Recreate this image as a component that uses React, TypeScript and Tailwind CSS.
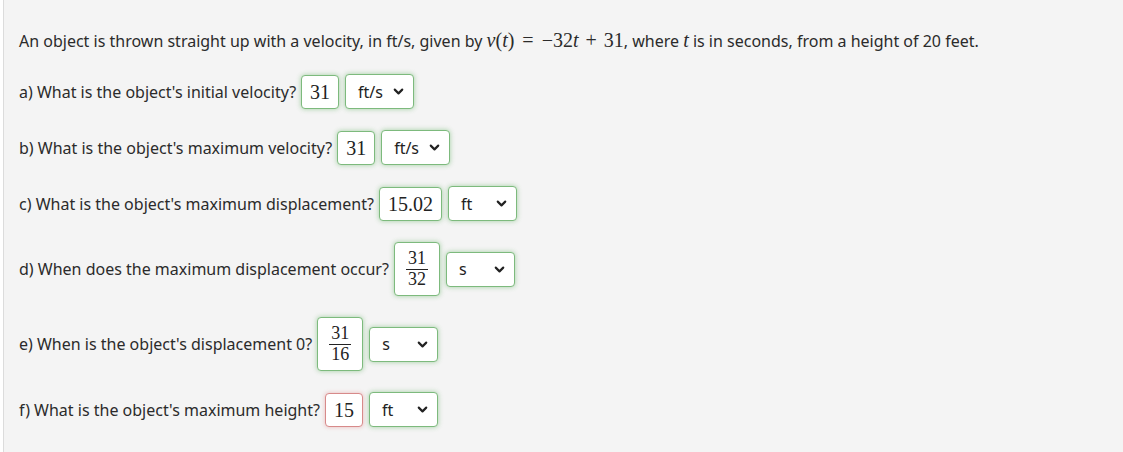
import { ChevronDown } from 'lucide-react';

const sans = "font-['Segoe_UI','Noto_Sans',sans-serif]";
const serif = "font-['Liberation_Serif','DejaVu_Serif',serif]";

function AnswerBox({ children, wrong = false, tall = false }: { children: React.ReactNode; wrong?: boolean; tall?: boolean }) {
  return (
    <div
      className={`${serif} flex items-center justify-center bg-white rounded-[4px] border px-[8px] text-[20px] text-[#222] ${
        tall ? 'h-[54px] px-[11px]' : 'h-[34px]'
      } ${
        wrong
          ? 'border-[#d78a8a] shadow-[0_0_4px_rgba(220,80,80,0.35)]'
          : 'border-[#7dba7d] shadow-[0_0_5px_rgba(60,160,60,0.45)]'
      }`}
    >
      {children}
    </div>
  );
}

function Frac({ num, den }: { num: string; den: string }) {
  return (
    <span className="flex flex-col items-center leading-[19px] text-[18px]">
      <span className="border-b border-[#222] px-[2px] pb-[1px]">{num}</span>
      <span>{den}</span>
    </span>
  );
}

function UnitSelect({ unit }: { unit: string }) {
  return (
    <div className="flex items-center justify-between w-[69px] h-[35px] bg-white rounded-[4px] border border-[#7dba7d] shadow-[0_0_5px_rgba(60,160,60,0.45)] pl-[12px] pr-[7px] text-[16px] text-[#222]">
      <span>{unit}</span>
      <ChevronDown className="w-[15px] h-[15px] text-[#222]" strokeWidth={3.4} />
    </div>
  );
}

function Row({ label, children }: { label: string; children: React.ReactNode }) {
  return (
    <div className="flex items-center">
      <span className="mr-[5px]">{label}</span>
      <div className="flex items-center gap-[6px]">{children}</div>
    </div>
  );
}

export default function App() {
  return (
    <div className="bg-white w-[1123px] h-[452px] overflow-hidden pl-[3px]">
      <div className={`${sans} h-full bg-[#f4f4f4] border-l border-[#dcdcdc] pl-[15px] pt-[29px] text-[16px] text-[#2b2b2b]`}>
        <p className="leading-[22px]">
          An object is thrown straight up with a velocity, in ft/s, given by{' '}
          <span className={`${serif} text-[20px]`}>
            <i>v</i>(<i>t</i>)<span className="mx-[8px]">=</span>−32<i>t</i>
            <span className="mx-[7px]">+</span>31
          </span>
          , where <i className={`${serif} text-[20px]`}>t</i> is in seconds, from a height of 20 feet.
        </p>

        <div className="flex flex-col gap-[21px] mt-[22px]">
          <Row label="a) What is the object's initial velocity?">
            <AnswerBox>31</AnswerBox>
            <UnitSelect unit="ft/s" />
          </Row>
          <Row label="b) What is the object's maximum velocity?">
            <AnswerBox>31</AnswerBox>
            <UnitSelect unit="ft/s" />
          </Row>
          <Row label="c) What is the object's maximum displacement?">
            <AnswerBox>15.02</AnswerBox>
            <UnitSelect unit="ft" />
          </Row>
          <Row label="d) When does the maximum displacement occur?">
            <AnswerBox tall>
              <Frac num="31" den="32" />
            </AnswerBox>
            <UnitSelect unit="s" />
          </Row>
          <Row label="e) When is the object's displacement 0?">
            <AnswerBox tall>
              <Frac num="31" den="16" />
            </AnswerBox>
            <UnitSelect unit="s" />
          </Row>
          <Row label="f) What is the object's maximum height?">
            <AnswerBox wrong>15</AnswerBox>
            <UnitSelect unit="ft" />
          </Row>
        </div>
      </div>
    </div>
  );
}
